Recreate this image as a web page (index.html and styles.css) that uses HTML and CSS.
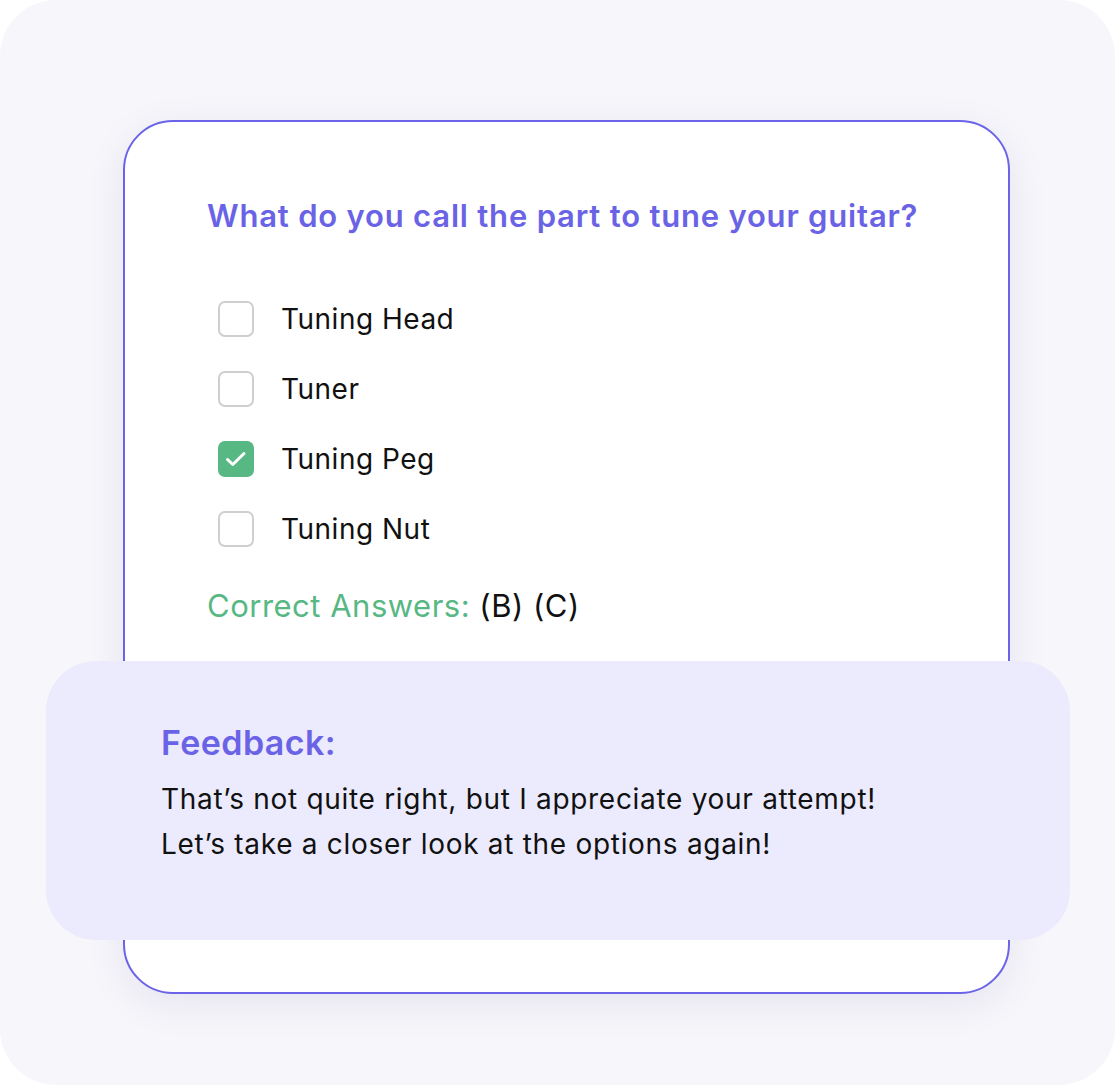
FILE: index.html
```html
<!DOCTYPE html>
<html lang="en">
<head>
    <meta charset="UTF-8">
    <title>Quiz Feedback</title>
    <link rel="stylesheet" href="styles.css">
</head>
<body>
    <div class="frame">
        <div class="card">
            <h2 class="question">What do you call the part to tune your guitar?</h2>

            <ul class="options">
                <li class="option">
                    <span class="checkbox"></span>
                    <span>Tuning Head</span>
                </li>
                <li class="option">
                    <span class="checkbox"></span>
                    <span>Tuner</span>
                </li>
                <li class="option">
                    <span class="checkbox checked">
                        <svg width="36" height="36" viewBox="0 0 36 36">
                            <path d="M9.5 18.5l5.3 5 11.2-11" fill="none" stroke="#fff" stroke-width="3" stroke-linecap="round" stroke-linejoin="round"/>
                        </svg>
                    </span>
                    <span>Tuning Peg</span>
                </li>
                <li class="option">
                    <span class="checkbox"></span>
                    <span>Tuning Nut</span>
                </li>
            </ul>

            <div class="answers">
                <span class="answers-label">Correct Answers:</span> (B) (C)
            </div>

            <div class="feedback">
                <div class="feedback-title">Feedback:</div>
                <p class="feedback-text">
                    That’s not quite right, but I appreciate your attempt!
                    <br>
                    Let’s take a closer look at the options again!
                </p>
            </div>
        </div>
    </div>
</body>
</html>
```

FILE: styles.css
```css
body {
    margin: 0;
    background: #fff;
    font-family: Inter, "Noto Sans", sans-serif;
    color: #111;
}

.frame {
    width: 1115px;
    height: 1085px;
    box-sizing: border-box;
    padding: 120px 105px 0 123px;
    background: #f7f6fb;
    border-radius: 56px;
}

.card {
    height: 874px;
    box-sizing: border-box;
    padding: 74px 0 0 82px;
    background: #fff;
    border: 2px solid #6c64e8;
    border-radius: 50px;
    box-shadow: 0 10px 40px rgba(40, 30, 90, 0.08);
}

.question {
    margin: 0;
    font-size: 31px;
    line-height: 40px;
    font-weight: 600;
    color: #6b63e6;
    letter-spacing: 0.8px;
}

.options {
    list-style: none;
    margin: 65px 0 0 11px;
    padding: 0;
}

.option {
    display: flex;
    align-items: center;
    gap: 27px;
    height: 36px;
    margin-bottom: 34px;
    font-size: 28px;
    letter-spacing: 0.5px;
    color: #111;
}

.option:last-child {
    margin-bottom: 0;
}

.checkbox {
    width: 36px;
    height: 36px;
    box-sizing: border-box;
    border: 2px solid #cfcfcf;
    border-radius: 7px;
    display: flex;
    align-items: center;
    justify-content: center;
    flex-shrink: 0;
}

.checkbox.checked {
    background: #57b884;
    border-color: #57b884;
}

.checkbox svg {
    flex-shrink: 0;
}

.answers {
    margin-top: 39px;
    font-size: 31px;
    line-height: 40px;
    letter-spacing: 0.5px;
    color: #111;
}

.answers-label {
    color: #57b884;
}

.feedback {
    margin: 35px -62px 0 -161px;
    height: 279px;
    box-sizing: border-box;
    padding: 62px 0 0 115px;
    background: #ecebfd;
    border-radius: 50px;
}

.feedback-title {
    font-size: 34px;
    line-height: 40px;
    font-weight: 600;
    letter-spacing: 0.4px;
    color: #6b63e6;
}

.feedback-text {
    margin: 14px 0 0;
    font-size: 28px;
    line-height: 45px;
    letter-spacing: 0.7px;
    color: #111;
}
```
